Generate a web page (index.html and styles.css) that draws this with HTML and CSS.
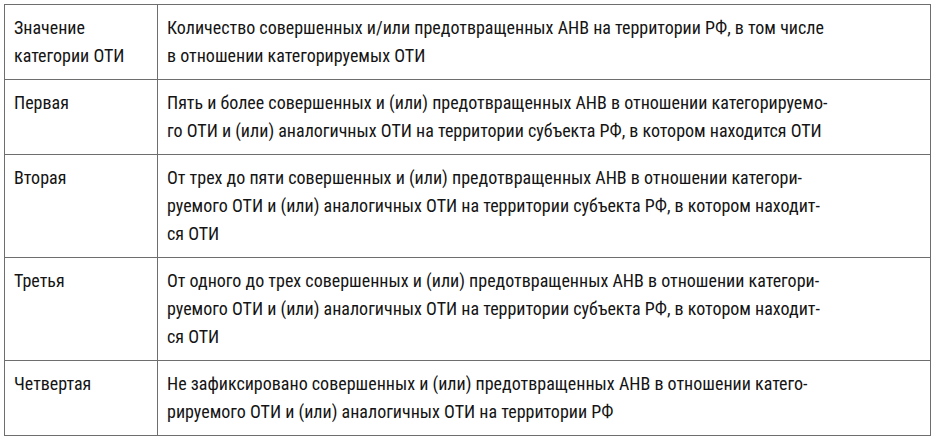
FILE: index.html
```html
<!DOCTYPE html>
<html lang="ru">
<head>
<meta charset="utf-8">
<link rel="stylesheet" href="styles.css">
</head>
<body>
<table class="cat-table">
  <colgroup><col class="col-a"><col class="col-b"></colgroup>
  <tr>
    <td>Значение<br>категории ОТИ</td>
    <td>Количество совершенных и/или предотвращенных АНВ на территории РФ, в том числе<br>в отношении категорируемых ОТИ</td>
  </tr>
  <tr>
    <td>Первая</td>
    <td>Пять и более совершенных и (или) предотвращенных АНВ в отношении категорируемо-<br>го ОТИ и (или) аналогичных ОТИ на территории субъекта РФ, в котором находится ОТИ</td>
  </tr>
  <tr>
    <td>Вторая</td>
    <td>От трех до пяти совершенных и (или) предотвращенных АНВ в отношении категори-<br>руемого ОТИ и (или) аналогичных ОТИ на территории субъекта РФ, в котором находит-<br>ся ОТИ</td>
  </tr>
  <tr>
    <td>Третья</td>
    <td>От одного до трех совершенных и (или) предотвращенных АНВ в отношении категори-<br>руемого ОТИ и (или) аналогичных ОТИ на территории субъекта РФ, в котором находит-<br>ся ОТИ</td>
  </tr>
  <tr>
    <td>Четвертая</td>
    <td>Не зафиксировано совершенных и (или) предотвращенных АНВ в отношении катего-<br>рируемого ОТИ и (или) аналогичных ОТИ на территории РФ</td>
  </tr>
</table>
</body>
</html>
```
FILE: styles.css
```css
html, body {
  margin: 0;
  background: #fff;
}
body {
  padding: 4px 0 0 4px;
}
.cat-table {
  border-collapse: collapse;
  width: 927px;
  table-layout: fixed;
  font-family: "Liberation Sans Narrow", "Arial Narrow", "Roboto Condensed", sans-serif;
  font-size: 18px;
  line-height: 28px;
  color: #141414;
}
.col-a { width: 153px; }
.cat-table td {
  border: 1px solid #6e6e6e;
  padding: 9px 8px 9px 9px;
  vertical-align: top;
  white-space: nowrap;
}
```
